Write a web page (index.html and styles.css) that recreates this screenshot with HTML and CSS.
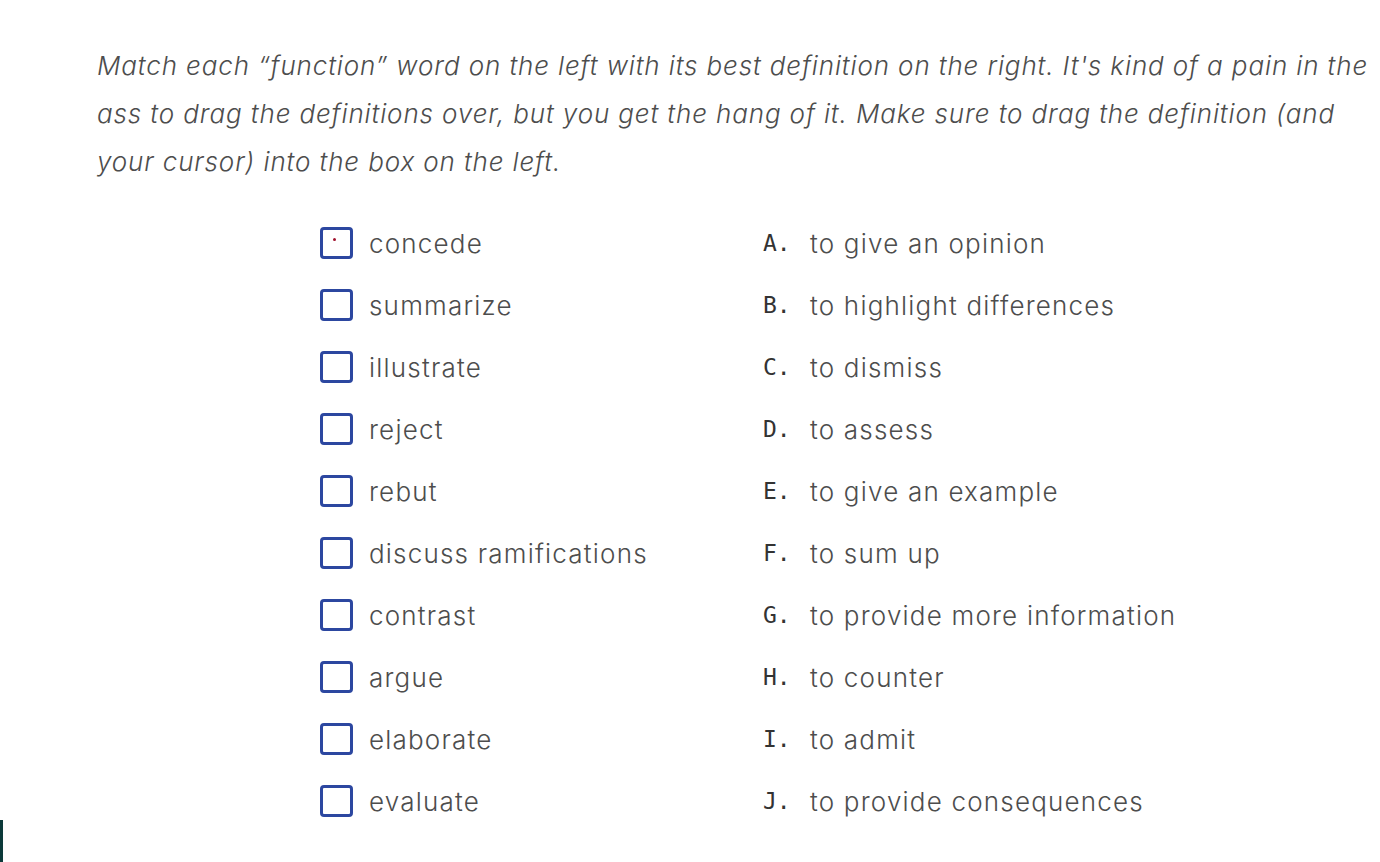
FILE: index.html
```html
<!DOCTYPE html>
<html lang="en">
<head>
<meta charset="utf-8">
<title>Match function words</title>
<link rel="stylesheet" href="styles.css">
</head>
<body>
<main class="page">
  <p class="intro">Match each “function” word on the left with its best definition on the right. It's kind of a pain in the ass to drag the definitions over, but you get the hang of it. Make sure to drag the definition (and your cursor) into the box on the left.</p>
  <div class="match">
    <div class="row"><div class="term"><span class="box"><span class="dot"></span></span><span>concede</span></div><div class="def"><span class="letter">A.</span><span>to give an opinion</span></div></div>
    <div class="row"><div class="term"><span class="box"></span><span>summarize</span></div><div class="def"><span class="letter">B.</span><span>to highlight differences</span></div></div>
    <div class="row"><div class="term"><span class="box"></span><span>illustrate</span></div><div class="def"><span class="letter">C.</span><span>to dismiss</span></div></div>
    <div class="row"><div class="term"><span class="box"></span><span>reject</span></div><div class="def"><span class="letter">D.</span><span>to assess</span></div></div>
    <div class="row"><div class="term"><span class="box"></span><span>rebut</span></div><div class="def"><span class="letter">E.</span><span>to give an example</span></div></div>
    <div class="row"><div class="term"><span class="box"></span><span>discuss ramifications</span></div><div class="def"><span class="letter">F.</span><span>to sum up</span></div></div>
    <div class="row"><div class="term"><span class="box"></span><span>contrast</span></div><div class="def"><span class="letter">G.</span><span>to provide more information</span></div></div>
    <div class="row"><div class="term"><span class="box"></span><span>argue</span></div><div class="def"><span class="letter">H.</span><span>to counter</span></div></div>
    <div class="row"><div class="term"><span class="box"></span><span>elaborate</span></div><div class="def"><span class="letter">I.</span><span>to admit</span></div></div>
    <div class="row"><div class="term"><span class="box"></span><span>evaluate</span></div><div class="def"><span class="letter">J.</span><span>to provide consequences</span></div></div>
  </div>
</main>
<div class="edge"></div>
</body>
</html>
```
FILE: styles.css
```css
html, body {
  margin: 0;
  padding: 0;
  background: #ffffff;
}
body {
  font-family: Inter, "DejaVu Sans", sans-serif;
  color: #4d4d4d;
  width: 1380px;
  height: 862px;
  overflow: hidden;
  position: relative;
}
.page {
  padding: 42px 0 0 97px;
}
.intro {
  margin: 0;
  width: 1290px;
  font-style: italic;
  font-size: 26px;
  font-weight: 300;
  letter-spacing: 0.87px;
  line-height: 48px;
}
.match {
  margin: 26px 0 0 223px;
  display: flex;
  flex-direction: column;
}
.row {
  display: grid;
  grid-template-columns: 443px 1fr;
  height: 62px;
  align-items: center;
}
.term, .def {
  display: flex;
  align-items: center;
  font-size: 26px;
  font-weight: 300;
  letter-spacing: 1.2px;
}
.box {
  width: 27px;
  height: 26px;
  border: 3px solid #2c47a0;
  border-radius: 4px;
  margin-right: 16px;
  flex: none;
  position: relative;
}
.dot {
  position: absolute;
  left: 10px;
  top: 8px;
  width: 3px;
  height: 3px;
  border-radius: 50%;
  background: #a0102c;
}
.letter {
  font-family: "DejaVu Sans Mono", "Liberation Mono", monospace;
  font-size: 23px;
  font-weight: 400;
  letter-spacing: 0;
  width: 47px;
  flex: none;
  color: #333;
}
.edge {
  position: absolute;
  left: 0;
  top: 820px;
  width: 3px;
  height: 42px;
  background: #0c3a3a;
}
```
